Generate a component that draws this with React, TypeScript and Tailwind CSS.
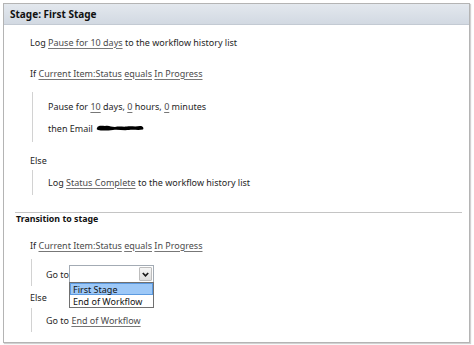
import React from "react";

const L = ({ children }: { children: React.ReactNode }) => (
  <span className="underline decoration-[#777] underline-offset-[2px] text-[#4b4b4b]">{children}</span>
);

const Row = ({ children, className = "" }: { children: React.ReactNode; className?: string }) => (
  <div className={"h-[14px] flex items-center " + className}>
    <span className="whitespace-pre">{children}</span>
  </div>
);

export default function App() {
  return (
    <div
      className="w-[474px] h-[345px] bg-white pl-[3px] pt-[3px] pr-[4px] pb-[2px] text-[9px] text-[#262626] leading-none"
      style={{ fontFamily: '"Noto Sans", "Open Sans", sans-serif' }}
    >
      <div className="h-full border border-[#b4b4b4] shadow-[1px_1px_1px_rgba(0,0,0,0.18)] flex flex-col">
        <div className="h-[21px] bg-gradient-to-b from-[#e3e8ee] to-[#d2d9e2] border-b border-[#c3cad3] flex items-center pl-[6px] font-bold text-[10px] text-[#111]">
          Stage: First Stage
        </div>
        <div className="pl-[26px] pt-[10px] flex flex-col">
          <Row>Log <L>Pause for 10 days</L> to the workflow history list</Row>
          <Row className="mt-[17px]">If <L>Current Item:Status</L> <L>equals</L> <L>In Progress</L></Row>
          <div className="ml-[2px] mt-[12px] border-l border-[#d2d2d2] pl-[15px] pt-[7px] pb-[7px] flex flex-col">
            <Row>Pause for <L>10</L> days, <L>0</L> hours, <L>0</L> minutes</Row>
            <div className="h-[14px] mt-[8px] flex items-center">
              <span className="whitespace-pre">then Email </span>
              <svg width="49" height="8" viewBox="0 0 49 8" className="ml-[1px]">
                <path d="M1 4 C2 1 6 2 9 2 C13 1 15 3 19 3 C23 2 27 3 31 2.5 C35 2 40 3 44 2 C47 2 48 4 47 5.5 C43 6.5 38 5.5 33 6 C27 6.5 22 5.5 17 6 C12 6.5 6 7 2 6 C0.5 5.5 0.5 5 1 4 Z" fill="#000" />
              </svg>
            </div>
          </div>
          <Row className="mt-[11px]">Else</Row>
          <div className="ml-[2px] mt-[3px] border-l border-[#d2d2d2] pl-[15px] pt-[5px] pb-[6px]">
            <Row>Log <L>Status Complete</L> to the workflow history list</Row>
          </div>
        </div>
        <div className="ml-[11px] mr-[7px] mt-[17px] border-t border-[#c4c4c4]" />
        <div className="pl-[12px] h-[13px] flex items-center font-bold text-[#111] text-[8.8px]">Transition to stage</div>
        <div className="pl-[26px] pt-[12px] flex flex-col">
          <Row>If <L>Current Item:Status</L> <L>equals</L> <L>In Progress</L></Row>
          <div className="ml-[1px] mt-[7px] border-l border-[#d2d2d2] pl-[14px] pt-[6px] pb-[3px] relative">
            <div className="flex items-center h-[18px]">
              <span className="w-[23px] shrink-0 whitespace-nowrap">Go to</span>
              <div className="w-[85px] h-[18px] border border-[#a3abb4] bg-white flex justify-end items-center pr-[1px]">
                <div className="w-[13px] h-[14px] bg-gradient-to-b from-[#f6f6f6] to-[#dedede] border border-[#bdbdbd] rounded-[1px] flex items-center justify-center">
                  <svg width="7" height="5" viewBox="0 0 7 5">
                    <path d="M0.8 1 L3.5 3.8 L6.2 1" stroke="#1a1a1a" strokeWidth="1.7" fill="none" />
                  </svg>
                </div>
              </div>
            </div>
            <div className="absolute left-[37px] top-[23px] w-[85px] h-[26px] border border-[#707070] bg-white z-10 text-[#111] flex flex-col">
              <div className="h-[12px] bg-[#9dc8f7] border border-[#5c9ae0] flex items-center pl-[2px]">First Stage</div>
              <div className="h-[12px] flex items-center pl-[3px]">End of Workflow</div>
            </div>
          </div>
          <Row className="mt-[4px]">Else</Row>
          <div className="ml-[1px] mt-[4px] border-l border-[#d2d2d2] pl-[14px] pt-[5px] pb-[5px]">
            <Row>Go to <L>End of Workflow</L></Row>
          </div>
        </div>
      </div>
    </div>
  );
}
